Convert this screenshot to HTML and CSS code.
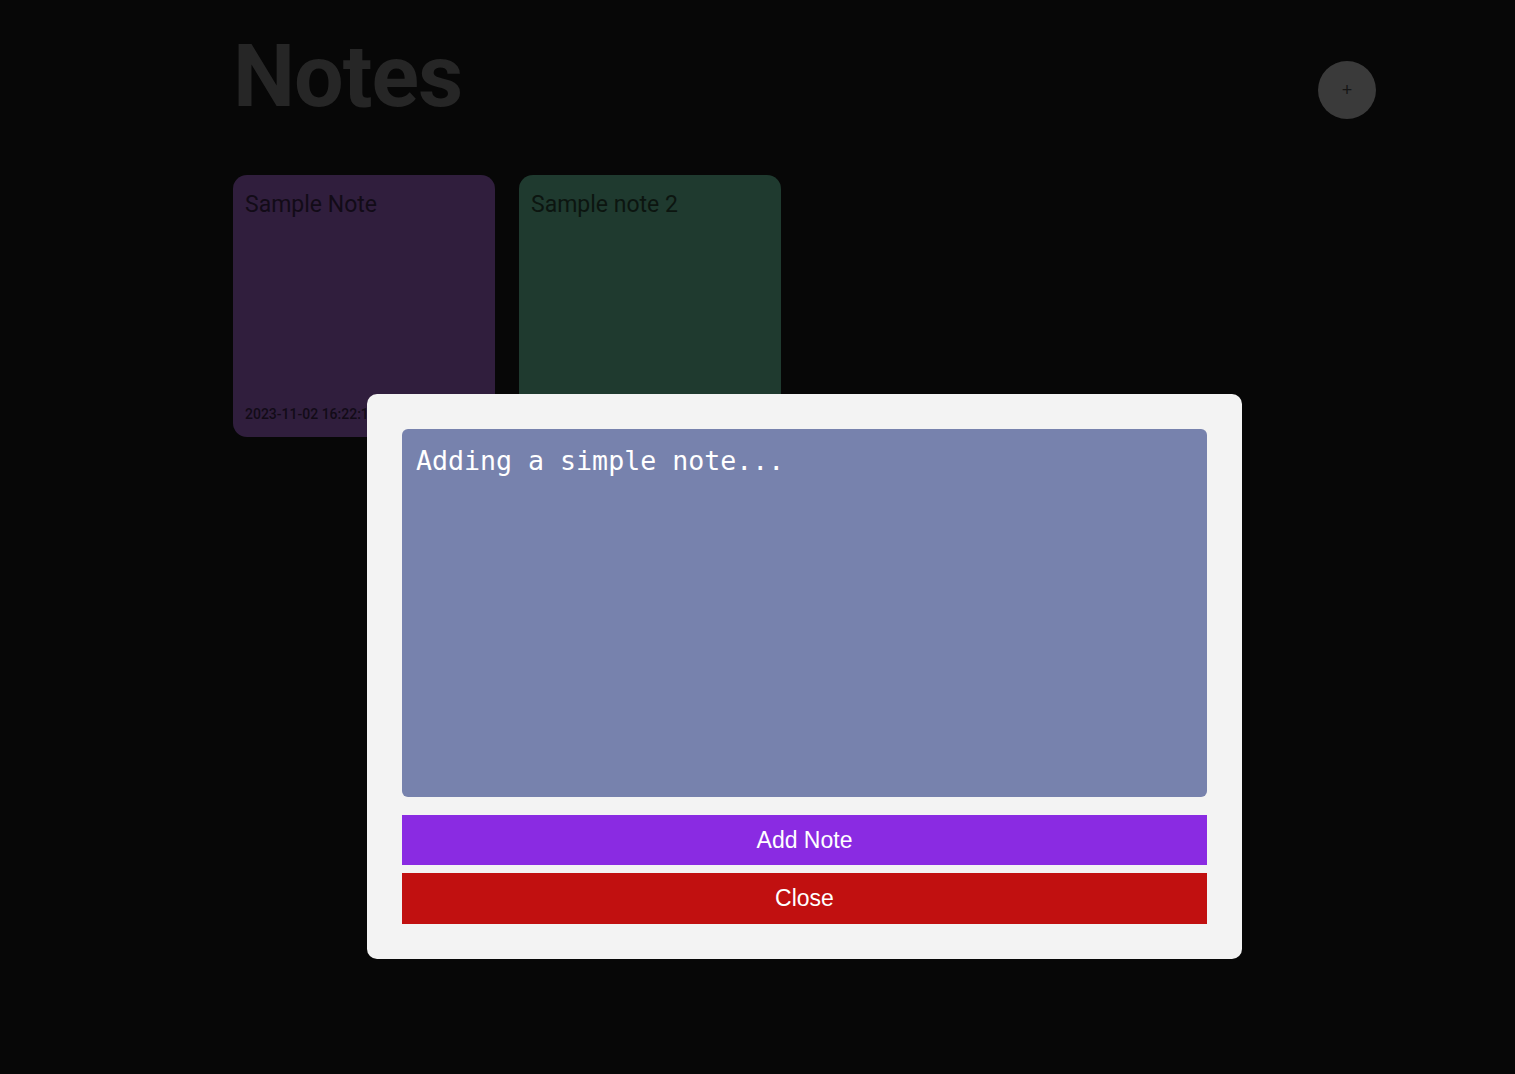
FILE: index.html
```html
<!DOCTYPE html>
<html lang="en">
<head>
    <meta charset="UTF-8">
    <meta name="viewport" content="width=device-width, initial-scale=1.0">
    <title>Notes</title>
    <link rel="stylesheet" href="styles.css">
</head>
<body>
    <div class="container">
        <header class="top-bar">
            <h1>Notes</h1>
            <button class="add-button">+</button>
        </header>
        <div class="note-list">
            <div class="note purple">
                <p class="note-text">Sample Note</p>
                <span class="note-date">2023-11-02 16:22:14</span>
            </div>
            <div class="note green">
                <p class="note-text">Sample note 2</p>
                <span class="note-date">2023-11-02 16:25:40</span>
            </div>
        </div>

        <!-- popup for a new note -->
        <div class="modal">
            <textarea class="note-input">Adding a simple note...</textarea>
            <button class="modal-button save">Add Note</button>
            <button class="modal-button close">Close</button>
        </div>
    </div>
</body>
</html>
```

FILE: styles.css
```css
body {
    margin: 0;
    padding: 0;
    background-color: #070707;
    font-family: Roboto, 'Liberation Sans', sans-serif;
    height: 1074px;
    overflow: hidden;
}
.container {
    position: relative;
    width: 1143px;
    margin-left: 233px;
}
.top-bar {
    display: flex;
    justify-content: space-between;
    align-items: flex-start;
    height: 175px;
}
.top-bar h1 {
    margin: 24px 0 0 0;
    font-size: 88px;
    font-weight: 700;
    letter-spacing: -1px;
    color: #262626;
}
.add-button {
    margin-top: 61px;
    width: 58px;
    height: 58px;
    border-radius: 50%;
    border: none;
    background-color: #3a3a3a;
    color: #151515;
    font-size: 18px;
    padding: 0;
}
.note-list {
    display: flex;
    gap: 24px;
}
.note {
    width: 262px;
    height: 262px;
    box-sizing: border-box;
    border-radius: 14px;
    padding: 16px 12px 15px 12px;
    display: flex;
    flex-direction: column;
    justify-content: space-between;
    color: #120b17;
}
.purple {
    background-color: #301e3d;
}
.green {
    background-color: #1f3a2f;
    color: #0c1510;
}
.note-text {
    margin: 0;
    font-size: 23px;
    font-weight: 400;
}
.note-date {
    font-size: 14px;
    font-weight: 500;
}
.modal {
    position: absolute;
    top: 394px;
    left: 134px;
    width: 875px;
    box-sizing: border-box;
    padding: 35px;
    background-color: #f3f3f3;
    border-radius: 10px;
    display: flex;
    flex-direction: column;
}
.note-input {
    height: 368px;
    box-sizing: border-box;
    border: none;
    border-radius: 6px;
    background-color: #7782ad;
    color: white;
    font-family: 'DejaVu Sans Mono', monospace;
    font-size: 26.6px;
    padding: 16px 14px;
    resize: none;
    margin-bottom: 18px;
}
.modal-button {
    border: none;
    color: white;
    font-family: 'Liberation Sans', Arial, sans-serif;
    font-size: 23px;
    height: 50px;
}
.save {
    background-color: #8a2be2;
    margin-bottom: 8px;
}
.close {
    background-color: #c11010;
    height: 51px;
}
```
